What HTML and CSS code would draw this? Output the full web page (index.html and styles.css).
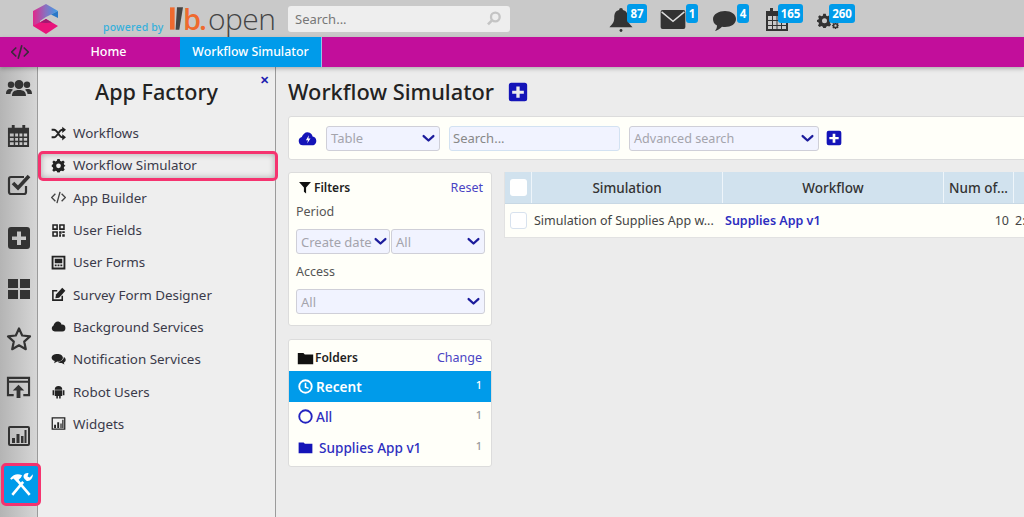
FILE: index.html
```html
<!DOCTYPE html>
<html lang="en">
<head>
    <meta charset="UTF-8">
    <title>Workflow Simulator</title>
    <link rel="stylesheet" href="styles.css">
</head>
<body>

    <svg class="defs" width="0" height="0">
        <linearGradient id="logo-grad" x1="0" y1="0" x2="1" y2="0"><stop offset="0" stop-color="#e0288c"/><stop offset=".5" stop-color="#8a70c0"/><stop offset="1" stop-color="#3aa0e8"/></linearGradient>
        <symbol id="i-plus" viewBox="0 0 24 24"><path fill-rule="evenodd" d="M4 1h16a3 3 0 0 1 3 3v16a3 3 0 0 1-3 3H4a3 3 0 0 1-3-3V4a3 3 0 0 1 3-3zm6 4.500v5H5v3.500h5v5h4v-5h5v-3.500h-5v-5z"/></symbol>
        <symbol id="i-chev" viewBox="0 0 16 10"><path d="M2 2l6 5.500L14 2" fill="none" stroke="currentColor" stroke-width="2.800" stroke-linecap="round" stroke-linejoin="round"/></symbol>
        <symbol id="i-code" viewBox="0 0 24 24"><path d="M7 6l-6 6 6 6M17 6l6 6-6 6M14.500 3l-5 18" fill="none" stroke="currentColor" stroke-width="2.200"/></symbol>
        <symbol id="i-gear" viewBox="0 0 24 24"><path fill-rule="evenodd" d="M10 1h4l.7 3.200 2.300 1 2.800-1.700 2.700 2.800L20.800 9l1 2.300L24 12v1l-2.200.7-1 2.300 1.700 2.800-2.700 2.700L17 20.800l-2.300 1L14 24h-4l-.7-2.200-2.300-1-2.800 1.700-2.700-2.700L3.200 17l-1-2.300L0 14v-3l2.200-.7 1-2.300L1.500 6.300l2.700-2.800L7 5.200l2.300-1zM12 8.500a4 4 0 1 0 0 8 4 4 0 0 0 0-8z"/></symbol>
    </svg>

    <header class="topbar">
        <svg class="logo" viewBox="0 0 25 30">
            <path fill="url(#logo-grad)" d="M13 0l12 7-12 6-6 4v5L0 22V7z"/>
            <path fill="#2a78c8" d="M25 7v7l-7-3.500z"/>
            <path fill="#e8147c" d="M0 22l13-7 12 7-12 8z"/>
            <path fill="#a01870" d="M7 18.500L13 15l6 3.500-6 .5z"/>
        </svg>
        <span class="powered">powered by</span>
        <span class="bopen">
            <svg class="bopen-mark" viewBox="0 0 14 24"><path fill="#ef6a2e" d="M0 0h5v24H0z"/><path fill="#444" d="M7.500 0h6.500l-4 24H6z"/></svg>
            <span class="bopen-b">b.</span><span class="bopen-word">open</span>
        </span>
        <div class="top-search">
            <span>Search...</span>
            <svg viewBox="0 0 24 24" width="16" height="16"><circle cx="14" cy="9" r="6.500" fill="none" stroke="#c4c4c4" stroke-width="3.500"/><path d="M9 14l-6 6" stroke="#c4c4c4" stroke-width="4"/></svg>
        </div>
        <div class="notes">
            <div class="note note-bell">
                <svg viewBox="0 0 24 26"><path fill="#333" d="M12 1a2 2 0 0 1 2 2c4 1 5 4 5 8 0 5 2 7 5 10H0c3-3 5-5 5-10 0-4 1-7 5-8a2 2 0 0 1 2-2z"/><circle cx="12" cy="24.500" r="1.500" fill="#333"/></svg>
                <span class="badge">87</span>
            </div>
            <div class="note note-mail">
                <svg viewBox="0 0 26 20"><path fill="#333" d="M2 0h22a2 2 0 0 1 2 2v16a2 2 0 0 1-2 2H2a2 2 0 0 1-2-2V2a2 2 0 0 1 2-2z"/><path d="M1 2l12 10L25 2" fill="none" stroke="#ddd" stroke-width="1.500"/></svg>
                <span class="badge">1</span>
            </div>
            <div class="note note-chat">
                <svg viewBox="0 0 24 20"><path fill="#333" d="M13 0c6 0 11 3 11 8s-5 8-11 8c-1 0-2 0-3-.2C8 18 5 19.500 3 20c1-1.500 2-3 2-5.500C2 13 1 10.500 1 8c0-5 6-8 12-8z"/></svg>
                <span class="badge">4</span>
            </div>
            <div class="note note-cal">
                <svg viewBox="0 0 22 24"><path fill="#333" fill-rule="evenodd" d="M0 4h4V1h3v3h8V1h3v3h4v20H0zM2 9v4h4V9zm5 0v4h3.500V9zm4.500 0v4H15V9zM16 9v4h4V9zM2 14v4h4v-4zm5 0v4h3.500v-4zm4.500 0v4H15v-4zm4.500 0v4h4v-4zM2 19v3h4v-3zm5 0v3h3.500v-3zm4.500 0v3H15v-3zm4.500 0v3h4v-3z"/></svg>
                <span class="badge">165</span>
            </div>
            <div class="note note-cogs">
                <svg viewBox="0 0 24 24" class="cog-big"><use href="#i-gear"/></svg>
                <svg viewBox="0 0 24 24" class="cog-small"><use href="#i-gear"/></svg>
                <span class="badge">260</span>
            </div>
        </div>
    </header>

    <nav class="tabbar">
        <svg class="tab-code" width="18" height="18"><use href="#i-code"/></svg>
        <a class="tab">Home</a>
        <a class="tab tab-active">Workflow Simulator</a>
    </nav>

    <div class="layout">
        <aside class="rail">
            <svg viewBox="0 0 26 20" width="26" height="20"><path d="M13 2a4.500 4.500 0 1 1 0 9 4.500 4.500 0 0 1 0-9zM5 3.500a3.200 3.200 0 1 1 0 6.400 3.200 3.200 0 0 1 0-6.400zm16 0a3.200 3.200 0 1 1 0 6.400 3.200 3.200 0 0 1 0-6.400zM6 18c0-4 2-6 7-6s7 2 7 6zM0 16c0-3 1-5 4.500-5 1 0 2 .3 2.500.8C5.500 13 4.500 14.500 4.500 16zm26 0c0-3-1-5-4.500-5-1 0-2 .3-2.500.8 1.500 1.200 2.500 2.700 2.500 4.200z"/></svg>
            <svg viewBox="0 0 24 25" width="23" height="24"><path fill-rule="evenodd" d="M1 4h4V1h3v3h8V1h3v3h4v20H1zM3 10v3h4v-3zm5.500 0v3h3v-3zm4.500 0v3h3v-3zm4.500 0v3h3.500v-3zM3 14.500v3h4v-3zm5.500 0v3h3v-3zm4.500 0v3h3v-3zm4.500 0v3h3.500v-3zM3 19v3h4v-3zm5.500 0v3h3v-3zm4.500 0v3h3v-3zm4.500 0v3h3.500v-3z"/></svg>
            <svg viewBox="0 0 24 24" width="24" height="24"><path d="M19 13v6a2 2 0 0 1-2 2H4a2 2 0 0 1-2-2V6a2 2 0 0 1 2-2h13" fill="none" stroke="#333" stroke-width="2.200"/><path d="M6 10l5 5L22 3" fill="none" stroke="#333" stroke-width="3.600"/></svg>
            <svg width="24" height="24"><use href="#i-plus"/></svg>
            <svg viewBox="0 0 24 24" width="24" height="24"><path d="M1 2h10v9H1zM13 2h10v9H13zM1 13h10v9H1zM13 13h10v9H13z"/></svg>
            <svg viewBox="0 0 26 26" width="26" height="26"><path d="M13 2.500l3.200 7 7.800.9-5.800 5.200 1.600 7.600L13 19.300l-6.800 3.900 1.600-7.600L2 10.400l7.800-.9z" fill="none" stroke="#333" stroke-width="2.200" stroke-linejoin="round"/></svg>
            <svg viewBox="0 0 26 24" width="25" height="23"><path d="M8 20H2V2h22v18h-6" fill="none" stroke="#333" stroke-width="2.200"/><path d="M2 5h22v2H2zM13 9l6 6h-4v8h-4v-8H7z"/></svg>
            <svg viewBox="0 0 24 24" width="24" height="24"><path d="M3 3h18a1 1 0 0 1 1 1v16a1 1 0 0 1-1 1H3a1 1 0 0 1-1-1V4a1 1 0 0 1 1-1z" fill="none" stroke="#333" stroke-width="2"/><path d="M5 14h3v5H5zM9.500 10h3v9h-3zM14 12h2.500v7H14zM17.500 6h2v13h-2z"/></svg>
        </aside>
        <div class="tools-btn">
            <svg viewBox="0 0 24 24" width="26" height="26"><path d="M4 22L14 10M20 22L8 8" stroke="#fff" stroke-width="2.400"/><path fill="#fff" d="M2 7c3-4 7-5 11-3l-1 2-4 4-3-3-2 1zM23 3l-3 3-2-1 1-3c-3-1-6 2-4 5l2 2c3 1 6-2 6-6z"/></svg>
        </div>

        <section class="panel">
            <span class="panel-close">✕</span>
            <h2 class="panel-title">App Factory</h2>
            <ul class="menu">
                <li><svg viewBox="0 0 24 24"><path d="M1 6h4c5 0 8 12 13 12h2M1 18h4c5 0 8-12 13-12h2" fill="none" stroke="#222" stroke-width="3"/><path fill="#222" d="M18 1l6 5-6 5zM18 13l6 5-6 5z"/></svg>Workflows</li>
                <li class="menu-current"><svg><use href="#i-gear"/></svg>Workflow Simulator</li>
                <li><svg class="thin"><use href="#i-code"/></svg>App Builder</li>
                <li><svg viewBox="0 0 24 24"><path fill="#222" fill-rule="evenodd" d="M2 2h9v9H2zm2.500 2.500v4h4v-4zM13 2h9v9h-9zm2.500 2.500v4h4v-4zM2 13h9v9H2zm2.500 2.500v4h4v-4zM13 13h4v4h-4zM18 13h4v3h-4zM13 18h3v4h-3zM18 18h4v4h-4z"/></svg>User Fields</li>
                <li><svg viewBox="0 0 24 24"><path fill="#222" fill-rule="evenodd" d="M1 1h22v22H1zm3 3v16h16V4zM6 6h12v7H6zM6 15h3v3H6zM10.500 15h3v3h-3zM15 15h3v3h-3z"/></svg>User Forms</li>
                <li><svg viewBox="0 0 24 24"><path d="M18 14v7H3V6h7" fill="none" stroke="#222" stroke-width="2.500"/><path fill="#222" d="M18 1l5 5-10 11-6 1 1-6z"/></svg>Survey Form Designer</li>
                <li><svg viewBox="0 0 24 24"><path fill="#222" d="M6 20a5 5 0 0 1-2-9.500C5 6 9 3 13 4.500c2 .7 3.500 2.500 4 4.500a5.500 5.500 0 0 1 1 11z"/></svg>Background Services</li>
                <li><svg viewBox="0 0 24 24"><path fill="#222" d="M10 3c5 0 9 2.500 9 6s-4 6-9 6l-5 3 1-3.500C3 13.500 1 11.500 1 9c0-3.500 4-6 9-6z"/><path fill="#222" d="M20.500 8c2 1 3 2.500 3 4.500 0 2-1 3.500-3 4.500l1 3-4.500-2.500c-3 0-5-.6-6.500-2 5 0 10-2.500 10-7.500z"/></svg>Notification Services</li>
                <li><svg viewBox="0 0 24 24"><path fill="#222" d="M6 9a6 6 0 0 1 12 0zM6 10h12v9h-2.500v4h-2.500v-4h-2v4H8.500v-4H6zM2.500 10h2.500v8H2.500zM19 10h2.500v8H19z"/></svg>Robot Users</li>
                <li><svg viewBox="0 0 24 24"><path d="M2 3h20v18H2z" fill="none" stroke="#222" stroke-width="2"/><path fill="#222" d="M5 14h3v5H5zM10 10h3v9h-3zM15 12h2v7h-2zM18 6h2v13h-2z"/></svg>Widgets</li>
            </ul>
        </section>

        <main class="content">
            <div class="page-head">
                <h1>Workflow Simulator</h1>
                <svg class="add-big"><use href="#i-plus"/></svg>
            </div>

            <div class="card toolbar">
                <svg class="cloud" viewBox="0 0 24 18"><path fill="#1414b8" d="M6 17a5 5 0 0 1-1.500-9.800C6 3 10 0 14 2c2 1 3 2.500 3.500 4.500A5.500 5.500 0 0 1 18.500 17z"/><path fill="#fff" d="M13 5l-3.500 6h2.500l-1 4 4-6h-2.500z"/></svg>
                <div class="field field-table">Table<svg class="chev"><use href="#i-chev"/></svg></div>
                <div class="field field-search">Search...</div>
                <div class="field field-adv">Advanced search<svg class="chev"><use href="#i-chev"/></svg></div>
                <svg class="add-small"><use href="#i-plus"/></svg>
            </div>

            <div class="columns">
                <div class="sidebar">
                    <div class="card filters">
                        <div class="card-head">
                            <span class="card-title"><svg viewBox="0 0 24 24"><path d="M1 2h22l-9 10v11l-4-3v-8z"/></svg>Filters</span>
                            <a class="link">Reset</a>
                        </div>
                        <label>Period</label>
                        <div class="field-row">
                            <div class="field">Create date<svg class="chev"><use href="#i-chev"/></svg></div>
                            <div class="field">All<svg class="chev"><use href="#i-chev"/></svg></div>
                        </div>
                        <label>Access</label>
                        <div class="field">All<svg class="chev"><use href="#i-chev"/></svg></div>
                    </div>

                    <div class="card folders">
                        <div class="card-head">
                            <span class="card-title"><svg class="folder-ico" viewBox="0 0 24 20"><path d="M1 3h8l2 2h12v14H1z"/></svg>Folders</span>
                            <a class="link">Change</a>
                        </div>
                        <div class="folder folder-on">
                            <span><svg viewBox="0 0 24 24"><circle cx="12" cy="12" r="10" fill="none" stroke="#fff" stroke-width="3"/><path d="M12 6v7l5 2" fill="none" stroke="#fff" stroke-width="2.500"/></svg>Recent</span><b>1</b>
                        </div>
                        <div class="folder">
                            <span><svg viewBox="0 0 24 24"><circle cx="12" cy="12" r="10" fill="none" stroke="#2424c0" stroke-width="3"/></svg>All</span><b>1</b>
                        </div>
                        <div class="folder">
                            <span class="folder-app"><svg viewBox="0 0 24 20"><path fill="#1414b8" d="M1 2h8l2 2h12v15H1z"/></svg>Supplies App v1</span><b>1</b>
                        </div>
                    </div>
                </div>

                <div class="grid">
                    <div class="grid-row grid-head">
                        <div class="cell c-check"><i class="box box-head"></i></div>
                        <div class="cell c-sim">Simulation</div>
                        <div class="cell c-flow">Workflow</div>
                        <div class="cell c-num">Num of...</div>
                        <div class="cell c-next"></div>
                    </div>
                    <div class="grid-row grid-body">
                        <div class="cell c-check"><i class="box"></i></div>
                        <div class="cell c-sim">Simulation of Supplies App w...</div>
                        <div class="cell c-flow"><a class="link-bold">Supplies App v1</a></div>
                        <div class="cell c-num">10</div>
                        <div class="cell c-next">2:</div>
                    </div>
                </div>
            </div>
        </main>
    </div>

    <!-- highlight frames drawn over the screenshot -->
    <div class="mark mark-menu"></div>
    <div class="mark mark-tools"></div>

</body>
</html>
```

FILE: styles.css
```css
* {
    box-sizing: border-box;
}
html, body {
    margin: 0;
    height: 517px;
    overflow: hidden;
}
body {
    width: 1024px;
    position: relative;
    background: #ececec;
    color: #333;
    font-family: 'Noto Sans', 'Open Sans', sans-serif;
    font-size: 14px;
}
.defs {
    position: absolute;
}

/* Barra superior */
.topbar {
    height: 37px;
    background: #c9c9c9;
    display: flex;
    align-items: center;
    padding-left: 33px;
}
.logo {
    width: 25px;
    height: 30px;
}
.powered {
    margin-left: 45px;
    width: 67px;
    margin-top: 17px;
    color: #35b0dc;
    font-size: 10.500px;
    font-weight: 500;
    letter-spacing: .2px;
    white-space: nowrap;
}
.bopen {
    display: flex;
    align-items: center;
    width: 118px;
    color: #444;
    font-family: 'Open Sans', sans-serif;
    font-size: 30px;
    line-height: 37px;
    letter-spacing: -.6px;
}
.bopen-mark {
    width: 13px;
    height: 23px;
}
.bopen-b {
    color: #ef6a2e;
    font-size: 29px;
    font-weight: 600;
    letter-spacing: -2px;
    margin-right: 3px;
}
.bopen-word {
    color: #444;
    font-weight: 300;
}
.top-search {
    width: 222px;
    height: 26px;
    background: #eee;
    border-radius: 3px;
    padding: 0 8px 0 7px;
    display: flex;
    align-items: center;
    justify-content: space-between;
    color: #777;
    font-size: 13px;
}
.notes {
    display: flex;
    margin-left: 99px;
}
.note {
    position: relative;
    width: 52px;
    height: 37px;
}
.note svg {
    position: absolute;
}
.badge {
    position: absolute;
    top: 4px;
    height: 19px;
    min-width: 12px;
    background: #009bea;
    border-radius: 3px;
    color: #fff;
    font-size: 11.500px;
    font-weight: 700;
    line-height: 19px;
    text-align: center;
}
.note-bell svg { left: 0; top: 7px; width: 24px; height: 25px; }
.note-bell .badge { left: 18px; width: 20px; }
.note-mail { width: 51px; }
.note-mail svg { left: -1px; top: 10px; width: 26px; height: 19px; }
.note-mail .badge { left: 25px; width: 12px; }
.note-chat { width: 53px; }
.note-chat svg { left: 0; top: 11px; width: 24px; height: 20px; }
.note-chat .badge { left: 25px; width: 12px; }
.note-cal svg { left: 1px; top: 7px; width: 22px; height: 24px; }
.note-cal .badge { left: 13px; width: 25px; }
.note-cogs .cog-big { left: 0; top: 13px; width: 15px; height: 15px; fill: #333; }
.note-cogs .cog-small { left: 15px; top: 22px; width: 7px; height: 7px; fill: #333; }
.note-cogs .badge { left: 12px; width: 26px; }

/* Pestañas */
.tabbar {
    height: 30px;
    background: #c20e9b;
    display: flex;
    box-shadow: 0 2px 4px rgba(0, 0, 0, 0.25);
    position: relative;
    z-index: 2;
}
.tab-code {
    width: 18px;
    height: 18px;
    margin: 6px 0 0 11px;
    color: #3a2a3a;
}
.tab {
    width: 141px;
    margin-left: 9px;
    color: #fff;
    text-align: center;
    line-height: 30px;
    font-size: 12.500px;
    font-weight: 500;
}
.tab-active {
    width: 142px;
    margin-left: 1px;
    background: #009bea;
    border-right: 1px solid #8fc6e8;
    font-size: 12.300px;
}

/* Cuerpo */
.layout {
    display: flex;
    height: 450px;
    position: relative;
}
.rail {
    width: 38px;
    background: linear-gradient(to right, #b4b4b4, #d6d6d6);
    border-right: 1px solid #9b9b9b;
    display: flex;
    flex-direction: column;
    align-items: center;
    padding-top: 11px;
}
.rail svg {
    fill: #333;
    margin-bottom: 26px;
}
.rail svg:nth-child(2) { margin-bottom: 25px; }
.rail svg:nth-child(3) { margin-bottom: 29px; }
.rail svg:nth-child(4) { margin-bottom: 27px; }
.rail svg:nth-child(5) { margin-bottom: 25px; }
.rail svg:nth-child(6) { margin-bottom: 24px; }
.rail svg:nth-child(7) { margin-bottom: 25px; }
.tools-btn {
    position: absolute;
    left: 3px;
    top: 398px;
    width: 36px;
    height: 38px;
    background: #009bea;
    display: flex;
    align-items: center;
    justify-content: center;
}
.panel {
    width: 238px;
    background: #eeeeee;
    border-right: 1px solid #9b9b9b;
    position: relative;
}
.panel-close {
    position: absolute;
    right: 6px;
    top: 6px;
    color: #1c1cb0;
    font-size: 11px;
    font-weight: 700;
    line-height: 14px;
}
.panel-title {
    margin: 0;
    padding-top: 8px;
    font-size: 21.600px;
    font-weight: 500;
    line-height: 33px;
    color: #222;
    text-align: center;
}
.menu {
    list-style: none;
    margin: 9px 0 0;
    padding: 0 0 0 13px;
}
.menu li {
    height: 32.300px;
    display: flex;
    align-items: center;
    gap: 7px;
    font-size: 13.400px;
    color: #3a3a4a;
}
.menu li svg {
    width: 15px;
    height: 15px;
    flex: none;
    fill: #222;
}
.menu li .thin {
    color: #444;
}
.menu-current svg {
    transform: scale(0.95);
}

.content {
    flex: 1;
    min-width: 0;
    padding: 0 0 0 12px;
}
.page-head {
    display: flex;
    align-items: center;
    height: 49px;
    gap: 14px;
}
.page-head h1 {
    margin: 0;
    font-size: 21.800px;
    font-weight: 500;
    color: #222;
}
.add-big {
    width: 20px;
    height: 20px;
    fill: #1414b8;
}
.card {
    background: #fffff9;
    border: 1px solid #dcdcdc;
    border-radius: 3px;
}
.toolbar {
    width: 760px;
    height: 44px;
    display: flex;
    align-items: center;
    padding-left: 9px;
}
.cloud {
    width: 20px;
    height: 15px;
    margin-right: 8px;
}
.field {
    height: 25px;
    display: flex;
    align-items: center;
    justify-content: space-between;
    padding: 0 4px;
    background: #f1f3ff;
    border: 1px solid #cfcfd8;
    border-radius: 3px;
    color: #a4a4ac;
    font-size: 13px;
    white-space: nowrap;
}
.chev {
    width: 13px;
    height: 9px;
    flex: none;
    color: #1c1c9c;
}
.field-table { width: 114px; }
.field-search { width: 171px; margin-left: 9px; padding-left: 3px; border-color: #d3e2f2; color: #888; }
.field-adv { width: 190px; margin-left: 9px; font-size: 12.600px; }
.add-small {
    width: 16px;
    height: 16px;
    margin-left: 7px;
    fill: #1414b8;
}
.columns {
    display: flex;
    gap: 12px;
    margin-top: 12px;
}
.sidebar {
    width: 204px;
    flex: none;
    display: flex;
    flex-direction: column;
    gap: 13px;
}
.filters {
    height: 154px;
    padding: 5px 6px 0 7px;
}
.card-head {
    display: flex;
    justify-content: space-between;
    align-items: center;
    height: 18px;
    padding: 0 2px;
    font-size: 12px;
}
.card-title {
    display: flex;
    align-items: center;
    gap: 2px;
    font-weight: 600;
    color: #222;
}
.card-title svg {
    width: 14px;
    height: 13px;
    fill: #111;
}
.card-title .folder-ico {
    width: 17px;
    height: 14px;
}
.folders .card-title {
    gap: 1px;
}
.link {
    color: #4a44c4;
    font-size: 12.500px;
}
.filters label {
    display: block;
    color: #555;
    font-size: 12.500px;
    line-height: 18px;
    margin: 7px 0 8px;
}
.filters .field-row + label {
    margin-top: 9px;
}
.field-row {
    display: flex;
    gap: 1px;
}
.field-row .field:first-child {
    width: 94px;
    padding-right: 2px;
}
.field-row .field:last-child {
    flex: 1;
}
.folders {
    height: 128px;
    padding-top: 9px;
}
.folders .card-head {
    padding: 0 9px 0 8px;
    height: 17px;
}
.folder {
    height: 30.500px;
    display: flex;
    align-items: center;
    justify-content: space-between;
    padding: 0 9px;
    color: #2e2ec0;
    font-size: 13.600px;
    font-weight: 500;
}
.folder b {
    color: #999;
    font-size: 11px;
    font-weight: 500;
    margin-top: -4px;
}
.folder span {
    display: flex;
    align-items: center;
    gap: 3px;
}
.folder svg {
    width: 15px;
    height: 15px;
}
.folder-app {
    gap: 6px !important;
}
.folder-on {
    background: #009bea;
    color: #fff;
    margin-top: 5px;
    font-weight: 600;
}
.folder-on b {
    color: #fff;
}
.grid {
    flex: none;
    width: 530px;
    height: 66px;
    background: #fffff9;
    border: 1px solid #e2e2e2;
    border-top: none;
}
.grid-row {
    display: flex;
}
.grid-head {
    height: 32px;
    background: #d1e2ee;
    border-bottom: 1px solid #c8d8e4;
    font-weight: 500;
    color: #333;
}
.grid-head .cell {
    border-right: 1px solid #eef5fa;
    justify-content: center;
    font-size: 13.500px;
}
.grid-body {
    height: 33px;
    font-size: 12.500px;
    color: #444;
}
.cell {
    display: flex;
    align-items: center;
    padding: 0 3px;
    white-space: nowrap;
    overflow: hidden;
}
.c-check { width: 27px; flex: none; justify-content: center; padding: 0; }
.c-sim { width: 191px; flex: none; }
.c-flow { width: 221px; flex: none; }
.c-num { width: 70px; flex: none; }
.c-next { flex: 1; }
.grid-body .c-num { justify-content: flex-end; padding-right: 5px; }
.grid-body .c-sim { padding-left: 2px; }
.grid-body .c-flow { padding-left: 2px; }
.grid-body .c-next { padding-left: 1px; }
.grid-head .c-num { padding: 0; }
.box {
    display: block;
    width: 17px;
    height: 17px;
    background: #fff;
    border: 1px solid #d8e2ee;
    border-radius: 3px;
}
.box-head {
    border: none;
}
.link-bold {
    color: #2e2ec0;
    font-weight: 600;
}

/* Recuadros rosas */
.mark {
    position: absolute;
    border: 3px solid #f5336f;
    border-radius: 5px;
}
.mark-menu {
    left: 38px;
    top: 151px;
    width: 240px;
    height: 30px;
    box-shadow: inset 0 0 6px rgba(0, 0, 0, 0.3);
}
.mark-tools {
    left: 1px;
    top: 463px;
    width: 40px;
    height: 43px;
}
```
